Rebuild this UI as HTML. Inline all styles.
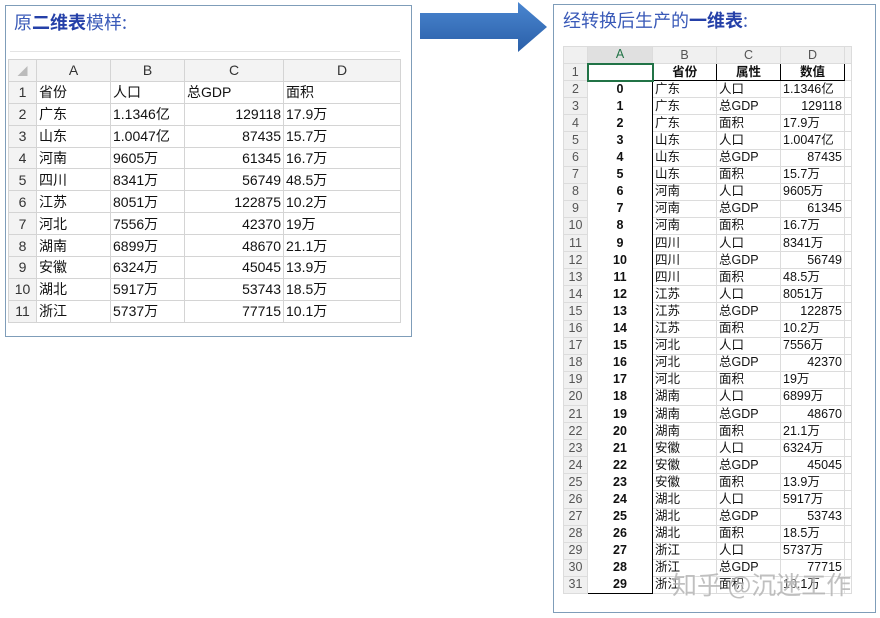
<!DOCTYPE html>
<html><head><meta charset="utf-8"><style>
*{margin:0;padding:0;box-sizing:border-box}
body{width:880px;height:618px;background:#fff;position:relative;overflow:hidden;font-family:"Liberation Sans","Microsoft YaHei","Noto Sans CJK SC",sans-serif}
.box{position:absolute;border:1px solid #7f9db9;background:#fff}
.title{position:absolute;font-size:18px;color:#3a5ab8;font-family:"Noto Sans CJK SC",sans-serif}
.title b{color:#2540a8}
table{position:absolute;border-collapse:collapse;table-layout:fixed}
.L td{height:21.9px;border:1px solid #d4d4d4;font-size:14px;padding:0 2px;color:#111;white-space:nowrap;font-family:"Liberation Sans","Noto Sans CJK SC",sans-serif}
.L td.h{background:#f3f3f3;text-align:center;color:#333}
.L td.r{text-align:right}
.R td{height:17.1px;border:1px solid #dcdcdc;font-size:12.5px;padding:0 2px;color:#111;white-space:nowrap;font-family:"Liberation Sans","Noto Sans CJK SC",sans-serif;line-height:15px}
.R td.h{background:#f0f0f0;text-align:center;color:#555}
.R td.n{font-weight:bold;text-align:center;border:1px solid #000;border-top:0;border-bottom:0;border-right:1px solid #000}
.R td.r{text-align:right}
.R td.k{font-weight:bold;text-align:center;border:1px solid #000}
</style></head><body>
<div class="box" style="left:5px;top:5px;width:407px;height:332px"></div>
<div class="title" style="left:14px;top:9px">原<b>二维表</b>模样:</div>
<div style="position:absolute;left:10px;top:51px;width:390px;height:1px;background:#e4e4e4"></div>
<table class="L" style="left:8px;top:59px;width:392px">
<colgroup><col style="width:28px"><col style="width:74px"><col style="width:74px"><col style="width:99px"><col style="width:117px"></colgroup>
<tr><td class="h" style="color:#bbb;font-size:10px">◢</td><td class="h">A</td><td class="h">B</td><td class="h">C</td><td class="h">D</td></tr>
<tr><td class="h">1</td><td>省份</td><td>人口</td><td>总GDP</td><td>面积</td></tr>
<tr><td class="h">2</td><td>广东</td><td>1.1346亿</td><td class="r">129118</td><td>17.9万</td></tr>
<tr><td class="h">3</td><td>山东</td><td>1.0047亿</td><td class="r">87435</td><td>15.7万</td></tr>
<tr><td class="h">4</td><td>河南</td><td>9605万</td><td class="r">61345</td><td>16.7万</td></tr>
<tr><td class="h">5</td><td>四川</td><td>8341万</td><td class="r">56749</td><td>48.5万</td></tr>
<tr><td class="h">6</td><td>江苏</td><td>8051万</td><td class="r">122875</td><td>10.2万</td></tr>
<tr><td class="h">7</td><td>河北</td><td>7556万</td><td class="r">42370</td><td>19万</td></tr>
<tr><td class="h">8</td><td>湖南</td><td>6899万</td><td class="r">48670</td><td>21.1万</td></tr>
<tr><td class="h">9</td><td>安徽</td><td>6324万</td><td class="r">45045</td><td>13.9万</td></tr>
<tr><td class="h">10</td><td>湖北</td><td>5917万</td><td class="r">53743</td><td>18.5万</td></tr>
<tr><td class="h">11</td><td>浙江</td><td>5737万</td><td class="r">77715</td><td>10.1万</td></tr>
</table>

<svg style="position:absolute;left:418px;top:0" width="134" height="56">
<defs><linearGradient id="g" x1="0" y1="0" x2="0" y2="1"><stop offset="0" stop-color="#4a86d0"/><stop offset="1" stop-color="#2a5fa8"/></linearGradient></defs>
<polygon points="2,13 100,13 100,2 129,27 100,52 100,39 2,39" fill="url(#g)"/>
</svg>

<div class="box" style="left:553px;top:4px;width:323px;height:609px"></div>
<div class="title" style="left:563px;top:7px">经转换后生产的<b>一维表</b>:</div>
<table class="R" style="left:563px;top:46px;width:288px">
<colgroup><col style="width:24px"><col style="width:65px"><col style="width:64px"><col style="width:64px"><col style="width:64px"><col style="width:7px"></colgroup>
<tr><td class="h"></td><td class="h" style="background:#e0e0e0;color:#217346;border-bottom:2px solid #217346">A</td><td class="h">B</td><td class="h">C</td><td class="h">D</td><td class="h"></td></tr>
<tr><td class="h">1</td><td style="border:2px solid #217346"></td><td class="k">省份</td><td class="k">属性</td><td class="k">数值</td><td></td></tr>
<tr><td class="h">2</td><td class="n">0</td><td>广东</td><td>人口</td><td>1.1346亿</td><td></td></tr>
<tr><td class="h">3</td><td class="n">1</td><td>广东</td><td>总GDP</td><td class="r">129118</td><td></td></tr>
<tr><td class="h">4</td><td class="n">2</td><td>广东</td><td>面积</td><td>17.9万</td><td></td></tr>
<tr><td class="h">5</td><td class="n">3</td><td>山东</td><td>人口</td><td>1.0047亿</td><td></td></tr>
<tr><td class="h">6</td><td class="n">4</td><td>山东</td><td>总GDP</td><td class="r">87435</td><td></td></tr>
<tr><td class="h">7</td><td class="n">5</td><td>山东</td><td>面积</td><td>15.7万</td><td></td></tr>
<tr><td class="h">8</td><td class="n">6</td><td>河南</td><td>人口</td><td>9605万</td><td></td></tr>
<tr><td class="h">9</td><td class="n">7</td><td>河南</td><td>总GDP</td><td class="r">61345</td><td></td></tr>
<tr><td class="h">10</td><td class="n">8</td><td>河南</td><td>面积</td><td>16.7万</td><td></td></tr>
<tr><td class="h">11</td><td class="n">9</td><td>四川</td><td>人口</td><td>8341万</td><td></td></tr>
<tr><td class="h">12</td><td class="n">10</td><td>四川</td><td>总GDP</td><td class="r">56749</td><td></td></tr>
<tr><td class="h">13</td><td class="n">11</td><td>四川</td><td>面积</td><td>48.5万</td><td></td></tr>
<tr><td class="h">14</td><td class="n">12</td><td>江苏</td><td>人口</td><td>8051万</td><td></td></tr>
<tr><td class="h">15</td><td class="n">13</td><td>江苏</td><td>总GDP</td><td class="r">122875</td><td></td></tr>
<tr><td class="h">16</td><td class="n">14</td><td>江苏</td><td>面积</td><td>10.2万</td><td></td></tr>
<tr><td class="h">17</td><td class="n">15</td><td>河北</td><td>人口</td><td>7556万</td><td></td></tr>
<tr><td class="h">18</td><td class="n">16</td><td>河北</td><td>总GDP</td><td class="r">42370</td><td></td></tr>
<tr><td class="h">19</td><td class="n">17</td><td>河北</td><td>面积</td><td>19万</td><td></td></tr>
<tr><td class="h">20</td><td class="n">18</td><td>湖南</td><td>人口</td><td>6899万</td><td></td></tr>
<tr><td class="h">21</td><td class="n">19</td><td>湖南</td><td>总GDP</td><td class="r">48670</td><td></td></tr>
<tr><td class="h">22</td><td class="n">20</td><td>湖南</td><td>面积</td><td>21.1万</td><td></td></tr>
<tr><td class="h">23</td><td class="n">21</td><td>安徽</td><td>人口</td><td>6324万</td><td></td></tr>
<tr><td class="h">24</td><td class="n">22</td><td>安徽</td><td>总GDP</td><td class="r">45045</td><td></td></tr>
<tr><td class="h">25</td><td class="n">23</td><td>安徽</td><td>面积</td><td>13.9万</td><td></td></tr>
<tr><td class="h">26</td><td class="n">24</td><td>湖北</td><td>人口</td><td>5917万</td><td></td></tr>
<tr><td class="h">27</td><td class="n">25</td><td>湖北</td><td>总GDP</td><td class="r">53743</td><td></td></tr>
<tr><td class="h">28</td><td class="n">26</td><td>湖北</td><td>面积</td><td>18.5万</td><td></td></tr>
<tr><td class="h">29</td><td class="n">27</td><td>浙江</td><td>人口</td><td>5737万</td><td></td></tr>
<tr><td class="h">30</td><td class="n">28</td><td>浙江</td><td>总GDP</td><td class="r">77715</td><td></td></tr>
<tr><td class="h">31</td><td class="n" style="border-bottom:1px solid #000">29</td><td>浙江</td><td>面积</td><td>10.1万</td><td></td></tr>
</table>
<div style="position:absolute;left:672px;top:566px;font-size:25px;color:rgba(150,150,150,0.6);font-family:'Noto Sans CJK SC',sans-serif;text-shadow:0 0 2px #fff;white-space:nowrap">知乎 @沉迷工作</div>
</body></html>
